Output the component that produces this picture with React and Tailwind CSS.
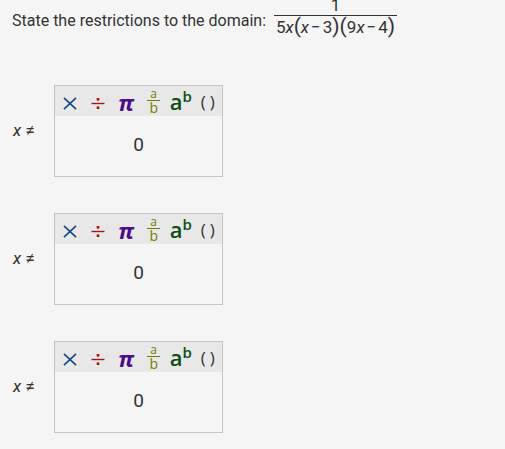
import React from 'react';

const font = { fontFamily: 'Roboto, "Liberation Sans", sans-serif' };
const symFont = { fontFamily: '"Open Sans", "Noto Sans", sans-serif' };

function Toolbar() {
  return (
    <div className="flex items-center h-[30px] pt-[5px] bg-[#e8e8e8] leading-none" style={symFont}>
      <span className="w-[28px] ml-[1px] flex justify-center text-[#1c4f8a]">
        <svg viewBox="0 0 14 13" className="w-[14px] h-[13px]" fill="none" stroke="currentColor" strokeWidth="1.8">
          <path d="M1 0.8l12 11.4M13 0.8l-12 11.4" />
        </svg>
      </span>
      <span className="w-[29px] flex justify-center text-[#a31515]">
        <svg viewBox="0 0 14 13" className="w-[14px] h-[13px]" fill="currentColor">
          <rect x="0.5" y="5.8" width="13" height="1.4" />
          <rect x="5.7" y="1" width="2.6" height="2.6" />
          <rect x="5.7" y="9.4" width="2.6" height="2.6" />
        </svg>
      </span>
      <span className="w-[29px] flex justify-center text-[#4b0c8a] italic font-bold text-[22px] -mt-[3px]">π</span>
      <span className="w-[27px] flex flex-col items-center text-[#7a7a00] -mt-[5px]">
        <span className="text-[12px] leading-[12px]">a</span>
        <span className="w-[13px] border-t border-[#7a7a00]"></span>
        <span className="text-[14px] leading-[13px]">b</span>
      </span>
      <span className="w-[28px] text-center text-[#0e4f14] font-semibold text-[22px] -mt-[5px]">
        a<span className="inline-block text-[15px] relative -top-[8px]">b</span>
      </span>
      <span className="w-[28px] text-center text-[#333] text-[17px] tracking-[4px] pl-[3px] -mt-[4px]">()</span>
    </div>
  );
}

function Row() {
  return (
    <div className="flex items-center">
      <div className="w-[54px] pl-[13px] text-[17px] text-[#333]">
        <span className="italic">x</span> ≠
      </div>
      <div className="w-[169px] h-[92px] border border-[#c4c4c4] bg-[#f5f5f5] flex flex-col">
        <Toolbar />
        <div className="flex-1 flex items-center justify-center text-[19px] text-[#333] pb-[1px]">0</div>
      </div>
    </div>
  );
}

export default function App() {
  return (
    <div className="w-[505px] h-[449px] bg-[#f5f5f5] text-[#333] overflow-hidden" style={font}>
      <div className="flex items-start pl-[12px]">
        <span className="text-[16px] mt-[9px]">State the restrictions to the domain:</span>
        <span className="ml-[8px] flex flex-col items-center -mt-[4px]">
          <span className="text-[17px] leading-[19px]">1</span>
          <span className="w-[123px] border-t border-[#333]"></span>
          <span className="text-[17px] leading-[21px] whitespace-nowrap">
            5<i>x</i><span className="text-[21px]">(</span><i>x</i><span className="px-[2px]">−</span>3<span className="text-[21px]">)(</span>9<i>x</i><span className="px-[2px]">−</span>4<span className="text-[21px]">)</span>
          </span>
        </span>
      </div>
      <div className="flex flex-col gap-[36px] mt-[47px]">
        <Row />
        <Row />
        <Row />
      </div>
    </div>
  );
}
